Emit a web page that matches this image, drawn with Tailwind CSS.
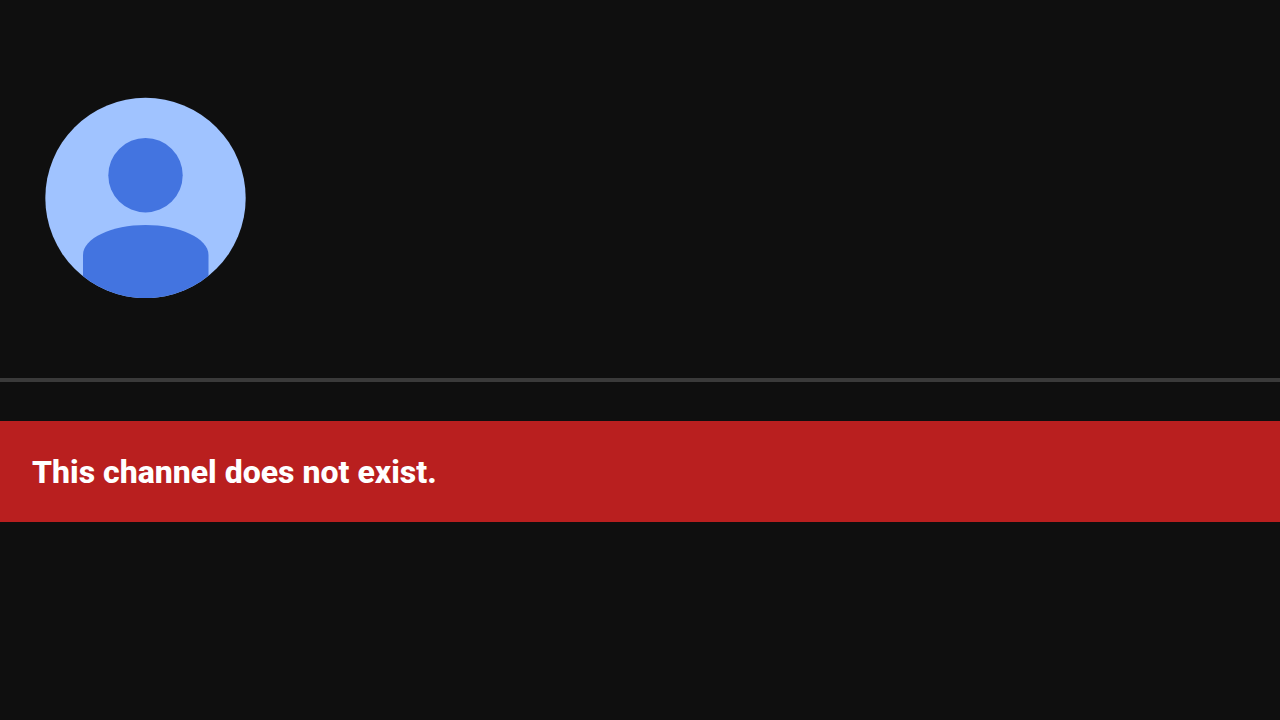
<!DOCTYPE html>
<html lang="en">
<head>
    <meta charset="UTF-8">
    <meta name="viewport" content="width=device-width, initial-scale=1.0">
    <title>Channel not found</title>
    <script src="https://cdn.jsdelivr.net/npm/@tailwindcss/browser@4"></script>
</head>
<body class="min-h-screen bg-[#0f0f0f] font-['Roboto',sans-serif] text-white">
    <!-- Channel header -->
    <header class="border-b-4 border-[#3a3a3a] px-[45px] pt-[97px] pb-20">
        <svg class="block size-[201px]" viewBox="0 0 201 201" role="img" aria-label="Channel avatar">
            <defs>
                <clipPath id="avatarClip">
                    <circle cx="100.5" cy="101" r="100.2" />
                </clipPath>
            </defs>
            <g clip-path="url(#avatarClip)">
                <rect width="201" height="201" fill="#a0c3ff" />
                <circle cx="100.5" cy="78.2" r="37.2" fill="#4374e0" />
                <path d="M38 201V158C38 141 67 128 100.500 128S163.500 141 163.500 158V201Z" fill="#4374e0" />
            </g>
        </svg>
    </header>

    <main class="pt-[39px]">
        <!-- Error banner -->
        <div role="alert" class="bg-[#b91f1f] px-8 pt-[31px] pb-[30px]">
            <p class="text-[32px] leading-10 font-extrabold">This channel does not exist.</p>
        </div>
    </main>
</body>
</html>
